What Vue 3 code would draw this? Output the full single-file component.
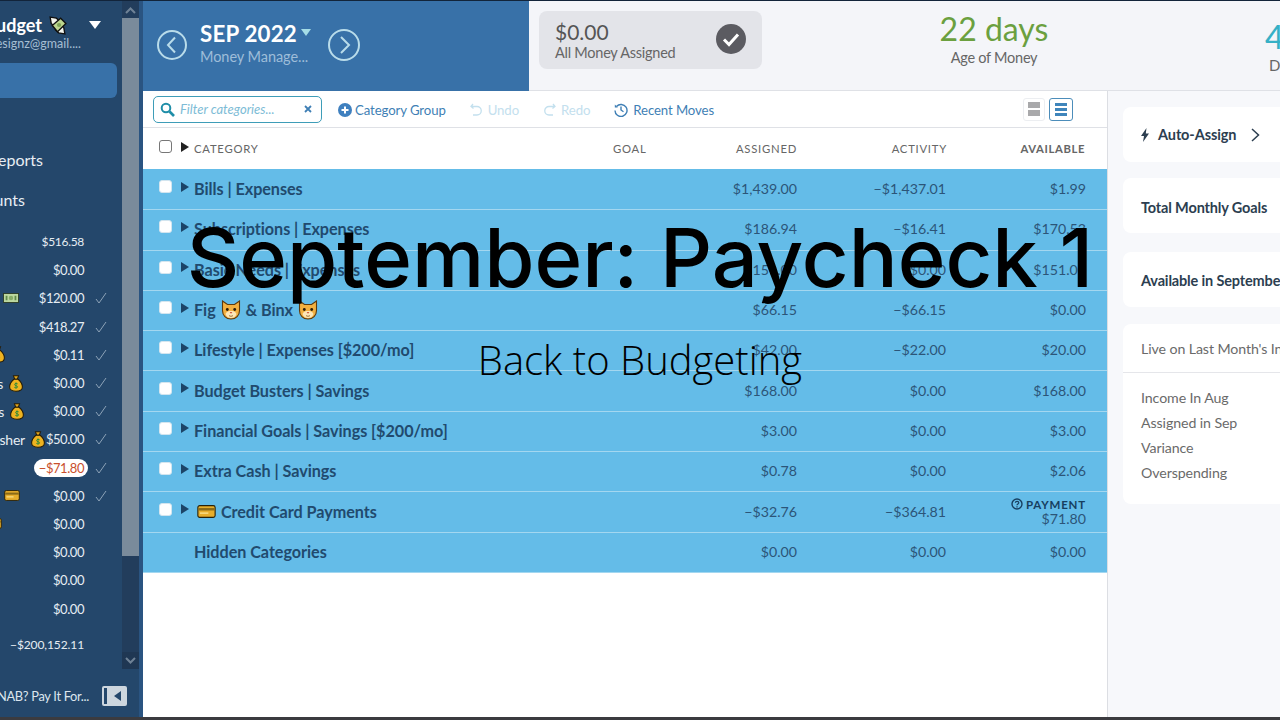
<script setup>
const accounts = [
  { amount: '$516.58', end: 40, small: true },
  { amount: '$0.00', end: 40 },
  { amount: '$120.00', end: 19, icon: 'bill', check: true },
  { amount: '$418.27', end: 20, check: true },
  { amount: '$0.11', end: 5, icon: 'bag', check: true },
  { text: 's', amount: '$0.00', end: 23, icon: 'bag', check: true },
  { text: 's', amount: '$0.00', end: 24, icon: 'bag', check: true },
  { text: 'sher', amount: '$50.00', end: 45, icon: 'bag', check: true },
  { amount: '−$71.80', end: 30, pill: true, check: true },
  { amount: '$0.00', end: 20, icon: 'card', check: true },
  { amount: '$0.00', end: 2, icon: 'card' },
  { amount: '$0.00', end: 20 },
  { amount: '$0.00', end: 20 },
  { amount: '$0.00', end: 20 }
]
const rows = [
  { parts: ['Bills | Expenses'], a: '$1,439.00', b: '−$1,437.01', c: '$1.99' },
  { parts: ['Subscriptions | Expenses'], a: '$186.94', b: '−$16.41', c: '$170.53' },
  { parts: ['Basic Needs | Expenses'], a: '$151.00', b: '−$0.00', c: '$151.00' },
  { parts: ['Fig ', 'cat', ' & Binx ', 'cat'], a: '$66.15', b: '−$66.15', c: '$0.00' },
  { parts: ['Lifestyle | Expenses [$200/mo]'], a: '$42.00', b: '−$22.00', c: '$20.00' },
  { parts: ['Budget Busters | Savings'], a: '$168.00', b: '$0.00', c: '$168.00' },
  { parts: ['Financial Goals | Savings [$200/mo]'], a: '$3.00', b: '$0.00', c: '$3.00' },
  { parts: ['Extra Cash | Savings'], a: '$0.78', b: '$0.00', c: '$2.06' },
  { parts: ['card', ' Credit Card Payments'], a: '−$32.76', b: '−$364.81', c: '$71.80', payment: true },
  { parts: ['Hidden Categories'], a: '$0.00', b: '$0.00', c: '$0.00', hidden: true }
]
const isIcon = (p) => p === 'cat' || p === 'card'
</script>

<template>
  <div class="page">
    <svg class="defs" width="0" height="0" aria-hidden="true">
      <defs>
        <symbol id="bag" viewBox="0 0 16 20">
          <path d="M5 1h6l-1.5 4h-3z" fill="#e0a51c" stroke="#221a08" stroke-width="1.2" />
          <path d="M5.500 5h5C14 8 15.500 11 15.500 14c0 3.500-3 5-7.500 5S.5 17.500.5 14C.5 11 2 8 5.500 5z" fill="#eeb321" stroke="#221a08" stroke-width="1.2" />
          <path d="M10 10.500C9.500 9.600 6.300 9.500 6.300 11.200c0 1.800 3.600 1 3.600 2.800 0 1.600-3.200 1.500-3.900.5M8 8.800v7" fill="none" stroke="#2d8a3a" stroke-width="1.100" />
        </symbol>
        <symbol id="card" viewBox="0 0 20 14">
          <rect x=".7" y=".7" width="18.600" height="12.600" rx="2" fill="#e7ae2c" stroke="#2a2208" stroke-width="1.200" />
          <rect x="1.300" y="3.300" width="17.400" height="2.600" fill="#8a6a18" />
          <rect x="3" y="8" width="9" height="1.500" fill="#fbe08a" />
        </symbol>
        <symbol id="bill" viewBox="0 0 18 11">
          <rect x=".5" y=".5" width="17" height="10" fill="#bcd8a0" stroke="#2b3a22" />
          <circle cx="9" cy="5.500" r="2.500" fill="#86ad68" />
          <rect x="3" y="3" width="2" height="5" fill="#5f8a48" />
          <rect x="13" y="3" width="2" height="5" fill="#5f8a48" />
        </symbol>
        <symbol id="cat" viewBox="0 0 20 20">
          <path d="M1.500 1l5 3.500h7l5-3.500v9.500c0 5-3.500 8.500-8.500 8.500s-8.500-3.500-8.500-8.500z" fill="#f2b040" stroke="#5e3a0c" stroke-width="1.100" />
          <path d="M4.500 14c1-2.500 3.200-3 5.500-3s4.500.5 5.500 3c-1 3-3.200 4-5.500 4s-4.500-1-5.500-4z" fill="#fde7b8" />
          <circle cx="6.300" cy="9.500" r="1.400" fill="#2c1c08" />
          <circle cx="13.700" cy="9.500" r="1.400" fill="#2c1c08" />
          <path d="M8.600 12h2.800L10 13.800z" fill="#d2553a" />
          <path d="M8 15.500c1 1 3 1 4 0" fill="none" stroke="#8a5a20" stroke-width=".8" />
        </symbol>
        <symbol id="wings" viewBox="0 0 20 20">
          <path d="M3 2l6 1 3 3-5 5-3-3z" fill="#f4f6ee" stroke="#111" stroke-width="1.300" />
          <path d="M17 18l-6-1-3-3 5-5 3 3z" fill="#f4f6ee" stroke="#111" stroke-width="1.300" />
          <path d="M5 10l8-7 5 5-8 8z" fill="#bcd58e" stroke="#111" stroke-width="1.300" />
          <circle cx="11.500" cy="9.500" r="2" fill="#7ea256" />
        </symbol>
      </defs>
    </svg>

    <aside class="sidebar">
      <div class="side-main">
        <div class="brand">
          <div class="brand-line">
            <span class="brand-name">Budget</span>
            <svg class="wings"><use href="#wings" /></svg>
            <span class="brand-caret"></span>
          </div>
          <div class="brand-mail"><span>designz@gmail....</span></div>
        </div>
        <div class="active-bar"></div>
        <div class="nav-clip nav-reports">Reports</div>
        <div class="nav-clip nav-accounts">Accounts</div>
        <div class="acct-list">
          <div v-for="(acc, i) in accounts" :key="i" class="acct">
            <div class="acct-label" :style="{ width: acc.end + 'px' }">
              <span v-if="acc.text">{{ acc.text }}</span>
              <svg v-if="acc.icon === 'bag'" class="i-bag"><use href="#bag" /></svg>
              <svg v-if="acc.icon === 'card'" class="i-card"><use href="#card" /></svg>
              <svg v-if="acc.icon === 'bill'" class="i-bill"><use href="#bill" /></svg>
            </div>
            <div class="acct-amount" :class="{ small: acc.small }">
              <span :class="{ pill: acc.pill }">{{ acc.amount }}</span>
            </div>
            <div class="acct-check">
              <svg v-if="acc.check" width="12" height="12" viewBox="0 0 12 12"><path d="M1 7l3 4 7-10" fill="none" stroke="#8da3b8" stroke-width="1" /></svg>
            </div>
          </div>
        </div>
        <div class="closed-total">−$200,152.11</div>
        <div class="side-foot">
          <span class="foot-text">NAB? Pay It For...</span>
          <span class="collapse">
            <span class="collapse-bar"></span>
            <span class="collapse-arrow"></span>
          </span>
        </div>
      </div>
      <div class="scrollbar">
        <div class="sb-btn sb-up"><svg width="11" height="7" viewBox="0 0 11 7"><path d="M1 6l4.500-4.500L10 6" fill="none" stroke="#6f8296" stroke-width="2" /></svg></div>
        <div class="sb-thumb"></div>
        <div class="sb-track"></div>
        <div class="sb-btn sb-down"><svg width="11" height="7" viewBox="0 0 11 7"><path d="M1 1l4.500 4.500L10 1" fill="none" stroke="#6f8296" stroke-width="2" /></svg></div>
        <div class="sb-end"></div>
      </div>
      <div class="side-strip"></div>
    </aside>

    <div class="main">
      <header class="topbar">
        <div class="month">
          <svg class="m-prev" width="32" height="32" viewBox="0 0 32 32"><circle cx="16" cy="16" r="14" fill="none" stroke="#b9dcea" stroke-width="2" /><path d="M19 8.500L12 16l7 7.500" fill="none" stroke="#b9dcea" stroke-width="2" /></svg>
          <div class="m-info">
            <div class="m-title">SEP 2022<span class="m-caret"></span></div>
            <div class="m-note">Money Manage...</div>
          </div>
          <svg class="m-next" width="34" height="34" viewBox="0 0 34 34"><circle cx="17" cy="17" r="15" fill="none" stroke="#b9dcea" stroke-width="2" /><path d="M14 9l8 8-8 8" fill="none" stroke="#b9dcea" stroke-width="2" /></svg>
        </div>
        <div class="summary">
          <div class="assigned">
            <div>
              <div class="as-val">$0.00</div>
              <div class="as-lab">All Money Assigned</div>
            </div>
            <svg class="as-check" width="30" height="30" viewBox="0 0 30 30"><circle cx="15" cy="15" r="15" fill="#5b5b61" /><path d="M8 15.500l5 5 9-10" fill="none" stroke="#fff" stroke-width="3" /></svg>
          </div>
          <div class="age">
            <div class="age-val">22 days</div>
            <div class="age-lab">Age of Money</div>
          </div>
          <div class="days">
            <div class="days-val">4</div>
            <div class="days-lab">D</div>
          </div>
        </div>
      </header>

      <div class="content">
        <section class="budget">
          <div class="toolbar">
            <div class="filter">
              <svg width="15" height="15" viewBox="0 0 15 15"><circle cx="6" cy="6" r="4.300" fill="none" stroke="#1f8ea8" stroke-width="2" /><path d="M9.500 9.500L14 14" stroke="#1f8ea8" stroke-width="2.600" /></svg>
              <span class="f-text">Filter categories...</span>
              <svg class="f-x" width="8" height="8" viewBox="0 0 8 8"><path d="M1 1l6 6M7 1L1 7" stroke="#3f7fb5" stroke-width="1.800" /></svg>
            </div>
            <div class="tool t-group">
              <svg width="14" height="14" viewBox="0 0 14 14"><circle cx="7" cy="7" r="7" fill="#3f80bf" /><path d="M7 3.500v7M3.500 7h7" stroke="#fff" stroke-width="2" /></svg>
              <span>Category Group</span>
            </div>
            <div class="tool faint t-undo">
              <svg width="12" height="13" viewBox="0 0 12 13"><path d="M3 1L1 3.500 3.500 5.500M1.500 3.500H7a4 4 0 010 8.500H3" fill="none" stroke="#c3e0ee" stroke-width="1.300" /></svg>
              <span>Undo</span>
            </div>
            <div class="tool faint t-redo">
              <svg width="12" height="13" viewBox="0 0 12 13"><path d="M9 1l2 2.500L8.500 5.500M10.500 3.500H5a4 4 0 000 8.500h4" fill="none" stroke="#c3e0ee" stroke-width="1.300" /></svg>
              <span>Redo</span>
            </div>
            <div class="tool t-recent">
              <svg width="14" height="14" viewBox="0 0 14 14"><path d="M2.500 3.500A6 6 0 111 7.500" fill="none" stroke="#3f7fb5" stroke-width="1.400" /><path d="M.8 1.500v3h3z" fill="#3f7fb5" /><path d="M7 3.500V7l2.500 1.800" fill="none" stroke="#3f7fb5" stroke-width="1.400" /></svg>
              <span>Recent Moves</span>
            </div>
            <div class="view-toggle">
              <div class="vt vt-off">
                <span></span><span></span>
              </div>
              <div class="vt vt-on">
                <span></span><span></span><span></span>
              </div>
            </div>
          </div>

          <div class="thead">
            <span class="cb cb-head"></span>
            <span class="tri tri-head"></span>
            <span class="th-cat">CATEGORY</span>
            <span class="th-goal">GOAL</span>
            <span class="th-num th-a">ASSIGNED</span>
            <span class="th-num th-b">ACTIVITY</span>
            <span class="th-num th-c">AVAILABLE</span>
          </div>

          <div class="tbody">
            <div v-for="row in rows" :key="row.parts.join('')" class="row">
              <span class="cb" :class="{ ghost: row.hidden }"></span>
              <span class="tri" :class="{ ghost: row.hidden }"></span>
              <span class="name">
                <template v-for="(p, j) in row.parts" :key="j">
                  <svg v-if="isIcon(p)" :class="p === 'cat' ? 'i-cat' : 'i-cardrow'"><use :href="'#' + p" /></svg>
                  <span v-else>{{ p }}</span>
                </template>
              </span>
              <span class="val val-a">{{ row.a }}</span>
              <span class="val val-b">{{ row.b }}</span>
              <span class="val val-c">
                <span v-if="row.payment" class="pay">
                  <svg width="12" height="12" viewBox="0 0 12 12"><circle cx="6" cy="6" r="5" fill="none" stroke="#173f60" stroke-width="1.400" /><path d="M4.300 4.700C4.500 3 7.800 3 7.800 4.800 7.800 6 6 6 6 7.300M6 8.200v1.200" fill="none" stroke="#173f60" stroke-width="1.200" /></svg>
                  PAYMENT
                </span>
                <span :class="{ paylow: row.payment }">{{ row.c }}</span>
              </span>
            </div>
          </div>
        </section>

        <aside class="inspector">
          <div class="card card-auto">
            <svg width="10" height="14" viewBox="0 0 10 14"><path d="M6.500 0L1 8h3l-1 6 6-8.500H5.800z" fill="#2c3e50" /></svg>
            <span class="auto-text">Auto-Assign</span>
            <svg width="9" height="14" viewBox="0 0 9 14"><path d="M1 1l6.500 6L1 13" fill="none" stroke="#2c3e50" stroke-width="1.500" /></svg>
          </div>
          <div class="card card-total">Total Monthly Goals</div>
          <div class="card card-avail">Available in September</div>
          <div class="card card-live">
            <div class="live-head">Live on Last Month's Income</div>
            <div class="live-list">
              <div>Income In Aug</div>
              <div>Assigned in Sep</div>
              <div>Variance</div>
              <div>Overspending</div>
            </div>
          </div>
        </aside>
      </div>
    </div>

    <div class="overlay">
      <div class="ov-title">September: Paycheck 1</div>
      <div class="ov-sub">Back to Budgeting</div>
    </div>
  </div>
</template>

<style>
html, body { margin: 0; padding: 0; background: #fff; }
</style>

<style scoped>
.page {
  position: relative;
  display: flex;
  width: 1280px;
  height: 720px;
  overflow: hidden;
  box-sizing: border-box;
  border-top: 1px solid #12243a;
  border-bottom: 3px solid #3b3b3f;
  font-family: Lato, "Liberation Sans", sans-serif;
  background: #fff;
}
.defs { position: absolute; }

.sidebar { display: flex; flex: 0 0 143px; background: #24476b; color: #e6edf3; }
.side-main { width: 122px; flex: 0 0 122px; display: flex; flex-direction: column; position: relative; z-index: 1; }
.brand { height: 62px; padding-top: 13px; box-sizing: border-box; }
.brand-line { display: flex; align-items: center; justify-content: flex-end; height: 22px; padding-right: 21px; }
.brand-name { font-weight: 700; font-size: 18px; color: #fff; white-space: nowrap; flex: none; }
.wings { width: 21px; height: 21px; margin-left: 5px; margin-right: 21px; flex: none; }
.brand-caret {
  width: 0; height: 0; flex: none;
  border-left: 6px solid transparent; border-right: 6px solid transparent; border-top: 8px solid #fff;
}
.brand-mail { display: flex; justify-content: flex-end; padding-right: 41px; font-size: 12.500px; color: #a5bed3; white-space: nowrap; line-height: 15px; }
.brand-mail span { flex: none; }
.active-bar { height: 35px; width: 117px; background: #3871a8; border-radius: 0 6px 6px 0; }
.nav-clip { display: flex; justify-content: flex-end; font-size: 16px; color: #e8eef3; white-space: nowrap; line-height: 20px; }
.nav-reports { margin-top: 52px; padding-right: 79px; }
.nav-accounts { margin-top: 20px; padding-right: 97px; }
.acct-list { margin-top: 18px; }
.acct { display: flex; align-items: center; height: 28.200px; font-size: 13px; letter-spacing: -.45px; color: #e6edf3; }
.acct-label { display: flex; flex: none; justify-content: flex-end; align-items: center; gap: 6px; overflow: hidden; white-space: nowrap; font-size: 14px; letter-spacing: -.2px; height: 100%; }
.acct-amount { flex: 1; text-align: right; min-width: 0; white-space: nowrap; }
.acct-amount.small { font-size: 12px; letter-spacing: -.3px; padding-bottom: 2px; }
.acct-check { flex: 0 0 38px; display: flex; justify-content: flex-start; padding-left: 11px; box-sizing: border-box; }
.pill {
  display: inline-block; background: #fff; color: #c9502d; border-radius: 10px;
  padding: 0 4px 0 5px; margin-right: -4px; line-height: 18px;
}
.i-bag { width: 14px; height: 17px; flex: none; }
.i-card { width: 16px; height: 11px; flex: none; }
.i-bill { width: 16px; height: 10px; flex: none; }
.closed-total { text-align: right; padding-right: 38px; font-size: 12px; letter-spacing: -.1px; margin-top: 10px; line-height: 24px; white-space: nowrap; }
.side-foot { display: flex; align-items: center; justify-content: flex-end; margin-top: 28px; height: 22px; }
.foot-text { font-size: 12.800px; letter-spacing: -.3px; white-space: nowrap; color: #dde6ee; flex: none; }
.collapse {
  display: flex; align-items: center; margin-left: 13px; margin-right: -5px; flex: none;
  width: 25px; height: 20px; background: #cdd6de; border-radius: 2px; box-sizing: border-box;
}
.collapse-bar { width: 3px; height: 16px; background: #24476b; margin-left: 2px; flex: none; }
.collapse-arrow { width: 0; height: 0; flex: none; margin-left: 7px; border-top: 5px solid transparent; border-bottom: 5px solid transparent; border-right: 7px solid #24476b; }

.scrollbar { flex: 0 0 17px; display: flex; flex-direction: column; background: #223d5c; }
.sb-btn { height: 15px; flex: none; display: flex; align-items: center; justify-content: center; }
.sb-up { margin-top: 2px; }
.sb-down { background: #1f3753; height: 17px; }
.sb-thumb { height: 538px; flex: none; background: #7a8b9b; }
.sb-track { flex: 1; }
.sb-end { height: 48px; flex: none; background: #24476b; }
.side-strip { flex: 0 0 4px; background: #2a5481; }

.main { flex: 1; min-width: 0; display: flex; flex-direction: column; }
.topbar { display: flex; height: 89px; flex: none; background: #f4f5f9; border-bottom: 1px solid #dfe1e6; }
.month { width: 386px; flex: none; background: #3871a8; display: flex; align-items: center; padding: 0 0 2px 13px; box-sizing: border-box; margin-bottom: -1px; }
.m-info { margin-left: 12px; width: 129px; margin-top: -6px; }
.m-title { font-size: 22.300px; font-weight: 700; color: #fff; line-height: 28px; letter-spacing: .2px; display: flex; align-items: center; white-space: nowrap; }
.m-caret { margin-left: 4px; margin-top: -3px; border-left: 5.500px solid transparent; border-right: 5.500px solid transparent; border-top: 7px solid #a5dde6; }
.m-note { font-size: 14.500px; color: #9ebdd9; line-height: 17px; white-space: nowrap; letter-spacing: -.05px; }
.m-next { margin-left: -2px; }
.summary { flex: 1; display: flex; position: relative; min-width: 0; overflow: hidden; }
.assigned {
  margin: 10px 0 0 10px; width: 223px; height: 58px; box-sizing: border-box; padding: 8px 16px;
  background: #e3e4e9; border-radius: 8px; display: flex; align-items: center; justify-content: space-between; flex: none;
}
.as-check { margin-top: -3px; }
.as-val { font-size: 21px; color: #555; line-height: 26px; }
.as-lab { font-size: 14.500px; color: #666; line-height: 16px; letter-spacing: -.25px; white-space: nowrap; }
.age { margin-left: 131px; width: 202px; text-align: center; flex: none; padding-top: 9px; }
.age-val { font-size: 32px; color: #6ba03f; line-height: 38px; }
.age-lab { font-size: 14.500px; color: #666; line-height: 18px; letter-spacing: -.25px; margin-top: 1px; }
.days { margin-left: 170px; flex: none; padding-top: 15px; }
.days-val { font-size: 33px; color: #36b0c6; line-height: 40px; }
.days-lab { font-size: 15px; color: #666; line-height: 18px; margin: 0 0 0 4px; }

.content { flex: 1; display: flex; min-height: 0; }
.budget { width: 964px; flex: none; background: #fff; }
.toolbar { height: 37px; display: flex; align-items: center; box-sizing: border-box; border-bottom: 1px solid #dfe1e6; padding-left: 10px; }
.filter {
  width: 169px; height: 27px; flex: none; box-sizing: border-box; border: 1px solid #3e9db8; border-radius: 5px;
  display: flex; align-items: center; padding: 0 9px 0 6px;
}
.f-text { flex: 1; margin-left: 5px; font-style: italic; font-size: 13px; color: #7dbcd6; white-space: nowrap; }
.tool { display: flex; align-items: center; font-size: 13.200px; color: #3f7fb5; white-space: nowrap; flex: none; letter-spacing: -.1px; padding-top: 1px; }
.faint { color: #c3e0ee; }
.t-group { margin-left: 16px; gap: 3px; }
.t-undo { margin-left: 24px; gap: 6px; }
.t-redo { margin-left: 25px; gap: 5px; }
.t-recent { margin-left: 24px; gap: 5px; }
.view-toggle { margin-left: auto; margin-right: 34px; display: flex; gap: 4px; }
.vt { width: 22px; height: 23px; box-sizing: border-box; border-radius: 3px; display: flex; flex-direction: column; align-items: center; justify-content: center; gap: 2px; }
.vt-off { border: 1px solid #eceef1; }
.vt-off span { width: 12px; height: 6px; background: #a9a9ab; }
.vt-on { width: 24px; border: 1px solid #4c8dba; gap: 2px; }
.vt-on span { width: 12px; height: 3px; background: #3f85bb; }

.thead { height: 41px; display: flex; align-items: center; font-size: 11.300px; letter-spacing: .75px; color: #666; box-sizing: border-box; padding-left: 16px; }
.cb { width: 13px; height: 13px; box-sizing: border-box; background: #fff; border-radius: 3px; border: 1px solid #d3e5ef; flex: none; margin-top: -4px; }
.cb-head { border-color: #777; margin-top: -4px; }
.tri { width: 0; height: 0; flex: none; margin-left: 9px; margin-top: -4px; border-top: 5px solid transparent; border-bottom: 5px solid transparent; border-left: 8px solid #1c4467; }
.tri-head { border-left-color: #222; margin-top: -3px; }
.ghost { visibility: hidden; }
.th-cat { margin-left: 5px; flex: none; width: 419px; }
.th-goal { flex: none; text-align: left; width: 33px; }
.th-num { flex: none; text-align: right; }
.th-a { width: 151px; }
.th-b { width: 150px; }
.th-c { width: 138px; font-weight: 700; color: #666; letter-spacing: .6px; }

.tbody { background: #64bce8; height: 404px; box-sizing: border-box; border-top: 1px solid #64bce8; display: flex; flex-direction: column; }
.row { flex: 1; display: flex; align-items: center; box-sizing: border-box; padding: 0 0 2px 16px; color: #1d4568; border-bottom: 1px solid #a3d7f0; }
.name { flex: none; width: 472px; margin-left: 5px; font-size: 16.200px; font-weight: 700; white-space: pre; display: flex; align-items: center; letter-spacing: -.05px; color: #214a6e; }
.val { flex: none; text-align: right; font-size: 14.200px; color: #2c5578; }
.val-a { width: 131px; }
.val-b { width: 149px; }
.val-c { width: 140px; display: flex; flex-direction: column; align-items: flex-end; }
.pay { display: flex; align-items: center; gap: 3px; font-size: 11.500px; font-weight: 700; letter-spacing: .8px; line-height: 13px; color: #173f60; }
.paylow { line-height: 13px; margin-top: 1px; }
.i-cat { width: 20px; height: 20px; margin: 0 1px; flex: none; }
.i-cardrow { width: 19px; height: 13px; flex: none; margin: 0 1px 0 3px; }

.inspector { flex: 1; min-width: 0; background: #f7f8fb; border-left: 1px solid #dcdee3; padding: 16px 0 0 15px; box-sizing: border-box; display: flex; flex-direction: column; overflow: hidden; }
.card { background: #fff; border-radius: 8px 0 0 8px; color: #2c3e50; white-space: nowrap; flex: none; width: 300px; box-sizing: border-box; }
.card-auto { height: 55px; display: flex; align-items: center; padding-left: 17px; font-size: 14.500px; font-weight: 700; letter-spacing: -.1px; }
.auto-text { margin: 0 15px 0 8px; }
.card-total { height: 55px; margin-top: 16px; padding-left: 18px; line-height: 59px; font-size: 14.500px; font-weight: 700; letter-spacing: -.15px; }
.card-avail { height: 55px; margin-top: 19px; padding-left: 18px; line-height: 58px; font-size: 14.500px; font-weight: 700; letter-spacing: -.15px; }
.card-live { height: 180px; margin-top: 17px; font-size: 14.200px; letter-spacing: -.1px; color: #6a6a6a; }
.live-head { height: 48px; line-height: 50px; padding-left: 18px; border-bottom: 1px solid #e5e6ea; }
.live-list { padding: 12px 0 0 18px; line-height: 25px; }

.overlay {
  position: absolute; left: 0; right: 0; top: 209px; display: flex; flex-direction: column; align-items: center;
  color: #000; pointer-events: none;
}
.ov-title { font-family: Inter, "Liberation Sans", sans-serif; font-weight: 500; font-size: 81.300px; line-height: 96px; white-space: nowrap; }
.ov-sub { font-family: "Open Sans", "Liberation Sans", sans-serif; font-weight: 300; font-size: 40px; line-height: 54px; margin-top: 27px; white-space: nowrap; }
</style>
